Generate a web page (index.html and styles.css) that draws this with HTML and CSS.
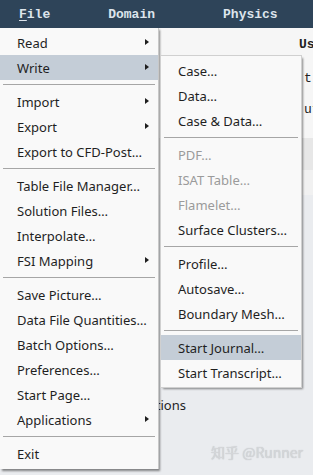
FILE: index.html
```html
<!DOCTYPE html>
<html>
<head>
<meta charset="utf-8">
<link rel="stylesheet" href="styles.css">
</head>
<body>
<div class="menubar">
  <span class="mb-item mb-file"><u>F</u>ile</span>
  <span class="mb-item mb-domain">Domain</span>
  <span class="mb-item mb-physics">Physics</span>
</div>
<div class="stage">
  <div class="bg">
    <div class="bg-row bg-r1"><span class="bg-mono bold">Us</span></div>
    <div class="bg-row bg-r2"><span class="bg-mono">t:</span></div>
    <div class="bg-row bg-r3"><span class="bg-mono">ut</span></div>
    <div class="bg-band"></div>
    <div class="bg-light"></div>
    <div class="bg-lower">
      <div class="bg-dash"></div>
      <div class="bg-apps"><span>Applications</span></div>
      <div class="watermark">知乎 @Runner</div>
    </div>
  </div>

  <div class="menu main">
    <div class="item">Read<i class="arrow"></i></div>
    <div class="item active">Write<i class="arrow"></i></div>
    <div class="sep"></div>
    <div class="item">Import<i class="arrow"></i></div>
    <div class="item">Export<i class="arrow"></i></div>
    <div class="item">Export to CFD-Post…</div>
    <div class="sep"></div>
    <div class="item">Table File Manager…</div>
    <div class="item">Solution Files…</div>
    <div class="item">Interpolate…</div>
    <div class="item">FSI Mapping<i class="arrow"></i></div>
    <div class="sep"></div>
    <div class="item">Save Picture…</div>
    <div class="item">Data File Quantities…</div>
    <div class="item">Batch Options…</div>
    <div class="item">Preferences…</div>
    <div class="item">Start Page…</div>
    <div class="item">Applications<i class="arrow"></i></div>
    <div class="sep"></div>
    <div class="item">Exit</div>
  </div>

  <div class="menu sub">
    <div class="item">Case…</div>
    <div class="item">Data…</div>
    <div class="item">Case &amp; Data…</div>
    <div class="sep"></div>
    <div class="item disabled">PDF…</div>
    <div class="item disabled">ISAT Table…</div>
    <div class="item disabled">Flamelet…</div>
    <div class="item">Surface Clusters…</div>
    <div class="sep"></div>
    <div class="item">Profile…</div>
    <div class="item">Autosave…</div>
    <div class="item">Boundary Mesh…</div>
    <div class="sep"></div>
    <div class="item active">Start Journal…</div>
    <div class="item">Start Transcript…</div>
  </div>
</div>
</body>
</html>
```

FILE: styles.css
```css
html, body {
  margin: 0;
  padding: 0;
}
body {
  width: 313px;
  height: 475px;
  overflow: hidden;
  background: #eaecef;
  font-family: "Noto Sans", "Open Sans", sans-serif;
}

.menubar {
  height: 28px;
  background: #2e4459;
  display: flex;
  align-items: center;
  font: bold 13px "Liberation Mono", monospace;
  color: #dde4ec;
}
.mb-file { margin-left: 19px; }
.mb-domain { margin-left: 58px; }
.mb-physics { margin-left: 68px; }
.mb-item u { text-decoration-thickness: 1px; text-underline-offset: 2px; }

.stage {
  position: relative;
  height: 447px;
}

/* background window content */
.bg {
  display: flex;
  flex-direction: column;
  height: 100%;
}
.bg-row {
  background: #f6f6f6;
  display: flex;
  align-items: center;
  white-space: nowrap;
  overflow: hidden;
}
.bg-r1 { height: 33px; padding-left: 299px; }
.bg-r2 { height: 34px; padding-left: 304px; }
.bg-r3 { height: 43px; padding-left: 304px; align-items: flex-start; }
.bg-r3 .bg-mono { margin-top: 7px; }
.bg-mono {
  font: 13px "Liberation Mono", monospace;
  color: #222;
}
.bold { font-weight: bold; }
.bg-band { height: 32px; background: #e7e7e7; }
.bg-light { height: 25px; background: #f1f1f1; }
.bg-lower {
  flex: 1;
  background: #eaecef;
  display: flex;
  flex-direction: column;
}
.bg-dash {
  margin: 190px 0 0 164px;
  width: 6px;
  height: 2px;
  background: #333;
}
.bg-apps {
  width: 186px;
  display: flex;
  justify-content: flex-end;
  margin-top: 8px;
  font-size: 13px;
  line-height: 20px;
  color: #1f1f1f;
  white-space: nowrap;
}
.watermark {
  margin: 27px 0 0 211px;
  font: 14px "Noto Sans CJK SC", "Noto Sans", sans-serif;
  line-height: 20px;
  color: #d4d6d9;
  text-shadow: 0 0 1px #b9bcc0;
  white-space: nowrap;
}

/* menus */
.menu {
  position: absolute;
  background: #f9f9f9;
  box-shadow: 1px 0 0 #c8c8c8, 2px 2px 2px rgba(0,0,0,0.45);
}
.main {
  left: 0;
  top: 0;
  width: 158px;
  padding: 2px 0 3px;
}
.sub {
  left: 161px;
  top: 28px;
  width: 140px;
  padding: 2px 0;
  box-shadow: 0 0 0 1px #d0d0d0, 2px 2px 2px rgba(0,0,0,0.45);
}
.item {
  position: relative;
  height: 25px;
  display: flex;
  align-items: center;
  padding-left: 17px;
  font-size: 13px;
  color: #1f1f1f;
  white-space: nowrap;
}
.item.active { background: #c4cdd7; }
.item.disabled { color: #9b9b9b; }
.sep {
  height: 9px;
  display: flex;
  align-items: center;
}
.sep::before {
  content: "";
  flex: 1;
  height: 1px;
  margin: 0 3px;
  background: #a6a6a6;
}
.arrow {
  position: absolute;
  right: 9px;
  top: 9px;
  width: 0;
  height: 0;
  border-left: 4px solid #1f1f1f;
  border-top: 3.5px solid transparent;
  border-bottom: 3.5px solid transparent;
}
```
